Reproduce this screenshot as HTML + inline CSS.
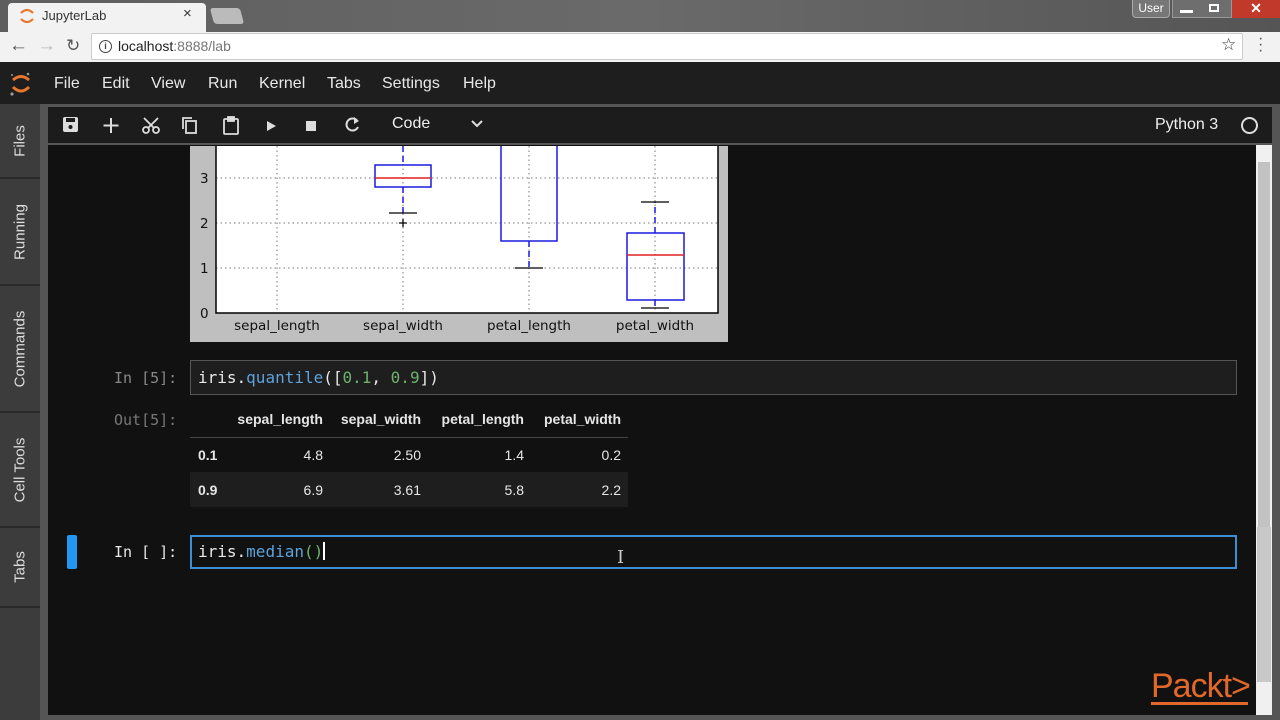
<!DOCTYPE html>
<html><head><meta charset="utf-8"><style>
*{margin:0;padding:0;box-sizing:border-box}
body{width:1280px;height:720px;overflow:hidden;background:#555;font-family:"Liberation Sans",sans-serif;position:relative}
.abs{position:absolute}
.mono{font-family:"DejaVu Sans Mono","Liberation Mono",monospace}
.menu span{position:absolute;top:75px;color:#e8e8e8;font-size:16px}
.side div{position:absolute;left:0;width:40px;border-bottom:2px solid #2a2a2a;background:#3c3c3c}
.side span{position:absolute;left:50%;top:50%;transform:translate(-50%,-50%) rotate(-90deg);color:#ddd;font-size:15px;white-space:nowrap}
td,th{font-size:14px;color:#e6e6e6;padding:0 7px 0 0;height:35px;text-align:right}
th{font-weight:bold}
</style></head><body>
<div class="abs" style="left:0;top:0;width:1280px;height:32px;background:linear-gradient(90deg,#5e5e5e,#6a6a6a 50%,#555)"></div>
<div class="abs" style="left:8px;top:3px;width:198px;height:29px;background:#f2f2f2;border-radius:4px 4px 0 0"></div>
<svg class="abs" style="left:18px;top:7px" width="18" height="18"><path d="M3 6 Q9 0 15 6" stroke="#e8772e" stroke-width="2.2" fill="none"/><path d="M3 12 Q9 18 15 12" stroke="#e8772e" stroke-width="2.2" fill="none"/></svg>
<div class="abs" style="left:42px;top:8px;font-size:13px;color:#333">JupyterLab</div>
<div class="abs" style="left:183px;top:5px;font-size:15px;color:#333">×</div>
<div class="abs" style="left:212px;top:8px;width:30px;height:16px;background:#bbb;border-radius:3px;transform:skewX(15deg)"></div>
<div class="abs" style="left:1132px;top:0;width:38px;height:18px;border:1px solid #aaa;border-top:0;border-radius:0 0 4px 4px;background:#777;color:#fff;font-size:12px;text-align:center;line-height:17px">User</div>
<div class="abs" style="left:1172px;top:0;width:60px;height:18px;background:#6e6e6e;border:1px solid #999;border-top:0"></div>
<div class="abs" style="left:1180px;top:10px;width:13px;height:3px;background:#fff"></div>
<div class="abs" style="left:1209px;top:4px;width:10px;height:8px;border:2px solid #fff"></div>
<div class="abs" style="left:1232px;top:0;width:48px;height:18px;background:#c0392b;color:#fff;font-size:14px;text-align:center;line-height:17px;font-weight:bold">✕</div>
<div class="abs" style="left:0;top:32px;width:1280px;height:30px;background:#f2f2f2"></div>
<div class="abs" style="left:9px;top:35px;font-size:19px;color:#555">←</div>
<div class="abs" style="left:37px;top:35px;font-size:19px;color:#bbb">→</div>
<div class="abs" style="left:66px;top:36px;font-size:17px;color:#555">↻</div>
<div class="abs" style="left:91px;top:33px;width:1152px;height:27px;background:#fff;border:1px solid #ccc;border-radius:2px"></div>
<div class="abs" style="left:99px;top:40px;width:13px;height:13px;border:1.5px solid #444;border-radius:50%;font-size:9px;text-align:center;line-height:10px;color:#444;font-weight:bold">i</div>
<div class="abs" style="left:118px;top:38px;font-size:14px;color:#222">localhost<span style="color:#777">:8888/lab</span></div>
<div class="abs" style="left:1221px;top:35px;font-size:17px;color:#333">☆</div>
<div class="abs" style="left:1258px;top:36px;font-size:16px;color:#555;line-height:6px">·<br>·<br>·</div>
<div class="abs" style="left:0;top:62px;width:1280px;height:42px;background:#1e1e1e"></div>
<svg class="abs" style="left:8px;top:70px" width="26" height="28"><path d="M5 10 Q13 3 21 10" stroke="#e8772e" stroke-width="3" fill="none"/><path d="M5 17 Q13 25 21 17" stroke="#e8772e" stroke-width="3" fill="none"/><circle cx="4" cy="24" r="1.6" fill="#999"/><circle cx="20" cy="4" r="1.3" fill="#999"/><circle cx="4" cy="5" r="1" fill="#999"/></svg>
<div class="menu"><span style="left:54px">File</span><span style="left:102px">Edit</span><span style="left:151px">View</span><span style="left:208px">Run</span><span style="left:259px">Kernel</span><span style="left:327px">Tabs</span><span style="left:382px">Settings</span><span style="left:463px">Help</span></div>
<div class="abs side" style="left:0;top:104px;width:40px;height:616px;background:#3c3c3c">
<div style="top:0;height:75px"><span>Files</span></div>
<div style="top:75px;height:107px"><span>Running</span></div>
<div style="top:182px;height:127px"><span>Commands</span></div>
<div style="top:309px;height:115px"><span>Cell Tools</span></div>
<div style="top:424px;height:80px"><span>Tabs</span></div>
</div>
<div class="abs" style="left:48px;top:107px;width:1224px;height:36px;background:#1c1c1c"></div>
<svg class="abs" style="left:60px;top:114px" width="360" height="22" fill="#ddd" stroke="#ddd">
<rect x="3" y="3" width="15" height="15" rx="2" stroke="none"/><rect x="6" y="4" width="9" height="4" fill="#1c1c1c" stroke="none"/><circle cx="10.5" cy="13" r="2" fill="#1c1c1c" stroke="none"/>
<path d="M51 4v15M43.5 11.5h15" stroke-width="2" fill="none"/>
<g fill="none" stroke-width="1.8"><circle cx="86" cy="16" r="3"/><circle cx="96" cy="16" r="3"/><path d="M88 14L98 4M94 14L84 4"/></g>
<g fill="none" stroke-width="1.8"><rect x="126" y="7" width="10" height="12"/><path d="M123 15V4h9"/></g>
<g fill="none" stroke-width="1.8"><rect x="164" y="5" width="14" height="15" rx="1"/><rect x="168" y="3" width="6" height="4" fill="#ddd"/></g>
<path d="M207 7l9 5-9 5z" stroke="none"/>
<rect x="246" y="7" width="10" height="10" stroke="none"/>
<path d="M297 6.5A6 6 0 1 0 298 13" fill="none" stroke-width="2"/><path d="M294 3l5 4-5 3z" stroke="none"/>
</svg>
<div class="abs" style="left:392px;top:115px;color:#eee;font-size:16px">Code</div>
<svg class="abs" style="left:470px;top:119px" width="14" height="10"><path d="M2 2l5 5 5-5" stroke="#ddd" stroke-width="2" fill="none"/></svg>
<div class="abs" style="left:1155px;top:116px;color:#eee;font-size:16px">Python 3</div>
<div class="abs" style="left:1241px;top:117px;width:17px;height:17px;border:2px solid #ddd;border-radius:50%"></div>
<div class="abs" style="left:48px;top:145px;width:1208px;height:570px;background:#111"></div>
<div class="abs" style="left:1256px;top:145px;width:16px;height:570px;background:#f0f0f0"></div>
<div class="abs" style="left:1258px;top:162px;width:12px;height:520px;background:#c2c2c2"></div>
<div class="abs" style="left:1257px;top:527px;width:14px;height:155px;background:#c8c8c8"></div>
<svg class="abs" style="left:190px;top:146px" width="538" height="196" font-family="DejaVu Sans,Liberation Sans,sans-serif" font-size="13.5">
<rect width="538" height="196" fill="#bfbfbf"/>
<rect x="26" y="0" width="502" height="167" fill="#fff"/>
<g stroke="#777" stroke-dasharray="1.5 3" stroke-width="1"><path d="M87 0v167M213 0v167M339 0v167M465 0v167M26 32h502M26 77h502M26 122h502"/></g>
<path d="M26 0V167H528V0" fill="none" stroke="#000" stroke-width="1.5"/>
<g fill="#111"><text x="10" y="37">3</text><text x="10" y="82">2</text><text x="10" y="127">1</text><text x="10" y="172">0</text></g>
<g fill="#111" text-anchor="middle"><text x="87" y="184">sepal_length</text><text x="213" y="184">sepal_width</text><text x="339" y="184">petal_length</text><text x="465" y="184">petal_width</text></g>
<g stroke="#1a1adf" stroke-width="1.5" fill="none">
<rect x="185" y="19" width="56" height="22"/><path d="M213 41v27M213 0v19" stroke-dasharray="6 4"/>
<rect x="311" y="-2" width="56" height="97"/><path d="M339 95v27" stroke-dasharray="6 4"/>
<rect x="437" y="87" width="57" height="67"/><path d="M465 87v-31M465 154v8" stroke-dasharray="6 4"/>
</g>
<g stroke="#000" stroke-width="1.3"><path d="M199 67h28M325 122h28M451 56h28M451 162h28M209 77h8M213 73v8"/></g>
<g stroke="#e02020" stroke-width="1.5"><path d="M185 32h56M437 109h57"/></g>
</svg>
<div class="abs mono" style="left:114px;top:369px;color:#888;font-size:15px">In [5]:</div>
<div class="abs" style="left:190px;top:360px;width:1047px;height:35px;background:#1e1e1e;border:1px solid #555"></div>
<div class="abs mono" style="left:198px;top:368px;color:#e8e8e8;font-size:16px">iris.<span style="color:#5ea2dc">quantile</span>([<span style="color:#6eb26e">0.1</span>, <span style="color:#6eb26e">0.9</span>])</div>
<div class="abs mono" style="left:114px;top:411px;color:#777;font-size:15px">Out[5]:</div>
<table class="abs" style="left:190px;top:402px;border-collapse:collapse;table-layout:fixed;width:438px">
<colgroup><col style="width:36px"><col style="width:104px"><col style="width:98px"><col style="width:103px"><col style="width:97px"></colgroup>
<tr style="border-bottom:1px solid #444"><th></th><th>sepal_length</th><th>sepal_width</th><th>petal_length</th><th>petal_width</th></tr>
<tr><th style="text-align:left;padding-left:8px">0.1</th><td>4.8</td><td>2.50</td><td>1.4</td><td>0.2</td></tr>
<tr style="background:#1e1e1e"><th style="text-align:left;padding-left:8px">0.9</th><td>6.9</td><td>3.61</td><td>5.8</td><td>2.2</td></tr>
</table>
<div class="abs" style="left:67px;top:535px;width:10px;height:34px;background:#2196f3;border-radius:2px"></div>
<div class="abs mono" style="left:114px;top:543px;color:#e8e8e8;font-size:15px">In [ ]:</div>
<div class="abs" style="left:190px;top:535px;width:1047px;height:34px;background:#111;border:2px solid #3a8fd6"></div>
<div class="abs mono" style="left:198px;top:542px;color:#e8e8e8;font-size:16px">iris.<span style="color:#5ea2dc">median</span><span style="color:#6eb26e">()</span><span style="display:inline-block;width:2px;height:18px;background:#fff;vertical-align:-3px"></span></div>
<div class="abs" style="left:617px;top:547px;color:#ccc;font-size:18px;font-family:'DejaVu Serif',serif">I</div>
<div class="abs" style="left:1151px;top:668px;color:#e0682a;font-size:34px;letter-spacing:-1px;line-height:36px">Packt&gt;</div>
<div class="abs" style="left:1151px;top:702px;width:97px;height:3px;background:#e0682a"></div>
</body></html>
